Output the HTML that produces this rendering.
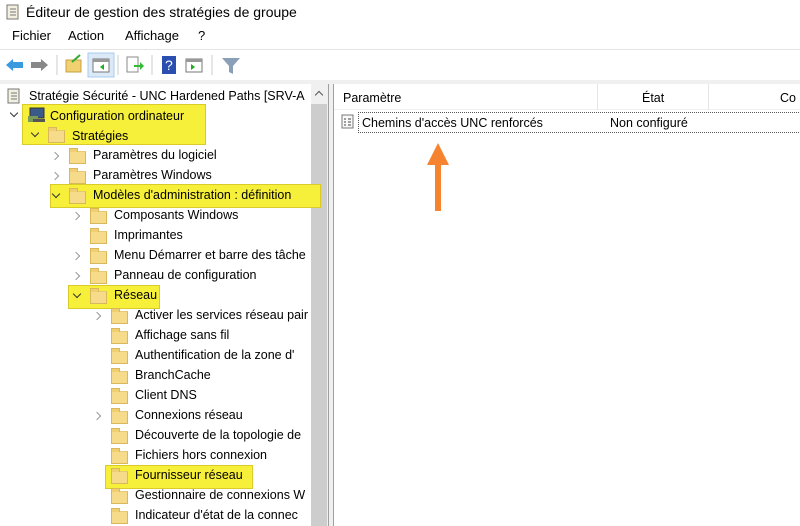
<!DOCTYPE html>
<html><head><meta charset="utf-8"><style>
*{margin:0;padding:0;box-sizing:border-box}
body{width:800px;height:526px;overflow:hidden;background:#fff;font-family:"Liberation Sans",sans-serif;font-size:12.5px;color:#000;position:relative}
.a{position:absolute;white-space:nowrap}
.hl{position:absolute;background:#f7f03a;border:1px solid #d9cc2a}
.fold{position:absolute;width:17px;height:13px;background:#f6dc8a;border:1px solid #d8b85a;border-top-color:#e7c874}
.fold:before{content:"";position:absolute;left:-1px;top:-4px;width:7px;height:3px;background:#f0cf72;border:1px solid #d8b85a;border-bottom:none}
.chev{position:absolute;width:6px;height:6px;border-right:1.5px solid #999;border-bottom:1.5px solid #999}
.r{transform:rotate(-45deg)}
.d{transform:rotate(45deg);border-color:#333}
.txt{position:absolute;white-space:nowrap;font-size:12.5px}
</style></head><body>
<svg class="a" style="left:5px;top:3px" width="16" height="18"><rect x="2" y="2" width="11" height="14" fill="#f3f0e0" stroke="#777"/><line x1="5" y1="6" x2="11" y2="6" stroke="#777"/><line x1="5" y1="9" x2="11" y2="9" stroke="#777"/><line x1="5" y1="12" x2="11" y2="12" stroke="#777"/></svg>
<div class="a" style="left:26px;top:4px;font-size:14px">Éditeur de gestion des stratégies de groupe</div>
<div class="a" style="left:12px;top:28px;font-size:13px">Fichier</div>
<div class="a" style="left:68px;top:28px;font-size:13px">Action</div>
<div class="a" style="left:125px;top:28px;font-size:13px">Affichage</div>
<div class="a" style="left:198px;top:28px;font-size:13px">?</div>
<div class="a" style="left:0;top:49px;width:800px;height:1px;background:#e5e5e5"></div>
<svg class="a" style="left:0;top:50px" width="260" height="30">
<path d="M6 15 L13 9 V12 H23 V18 H13 V21 Z" fill="#3a9ae0"/>
<path d="M48 15 L41 9 V12 H31 V18 H41 V21 Z" fill="#888"/>
<line x1="57" y1="5" x2="57" y2="25" stroke="#ccc"/>
<rect x="66" y="10" width="15" height="12" fill="#f0d070" stroke="#c8a040"/><path d="M72 12 L80 5" stroke="#3a3" stroke-width="2"/>
<rect x="88" y="3" width="26" height="24" fill="#dceaf8" stroke="#a8cbef"/>
<rect x="93" y="9" width="16" height="13" fill="#fff" stroke="#777"/><rect x="93" y="9" width="16" height="3" fill="#999"/><path d="M104 14 L100 17 L104 20Z" fill="#2a2"/>
<line x1="118" y1="5" x2="118" y2="25" stroke="#ccc"/>
<rect x="127" y="7" width="11" height="15" fill="#fff" stroke="#888"/><path d="M134 15 H140 V12 L144 16 L140 20 V17 H134Z" fill="#3b3"/>
<line x1="152" y1="5" x2="152" y2="25" stroke="#ccc"/>
<rect x="162" y="6" width="14" height="18" fill="#2a4fb0"/><text x="165" y="20" fill="#fff" font-size="14" font-family="Liberation Sans">?</text>
<rect x="186" y="9" width="16" height="13" fill="#fff" stroke="#777"/><rect x="186" y="9" width="16" height="3" fill="#999"/><path d="M191 14 L195 17 L191 20Z" fill="#2a2"/>
<line x1="212" y1="5" x2="212" y2="25" stroke="#ccc"/>
<path d="M222 8 H240 L233 16 V24 L229 22 V16 Z" fill="#8aa0b8"/>
</svg>
<div class="a" style="left:0;top:80px;width:800px;height:4px;background:#f0f0f0"></div>
<div class="a" style="left:328px;top:84px;width:6px;height:442px;border-left:1px solid #a0a0a0;border-right:1px solid #a0a0a0;background:#f0f0f0"></div>
<div class="a" style="left:311px;top:84px;width:17px;height:442px;background:#f0f0f0"></div>
<div class="a" style="left:311px;top:104px;width:16px;height:422px;background:#cdcdcd"></div>
<div class="chev" style="left:316px;top:92px;transform:rotate(-135deg);border-color:#555"></div>
<div class="hl" style="left:22px;top:104px;width:184px;height:41px"></div>
<div class="hl" style="left:50px;top:184px;width:271px;height:24px"></div>
<div class="hl" style="left:68px;top:285px;width:92px;height:24px"></div>
<div class="hl" style="left:105px;top:465px;width:148px;height:24px"></div>
<svg class="a" style="left:6px;top:87px" width="16" height="18"><rect x="2" y="2" width="11" height="14" fill="#f3f0e0" stroke="#777"/><line x1="5" y1="6" x2="11" y2="6" stroke="#777"/><line x1="5" y1="9" x2="11" y2="9" stroke="#777"/><line x1="5" y1="12" x2="11" y2="12" stroke="#777"/></svg>
<div class="txt" style="left:29px;top:89px">Stratégie Sécurité - UNC Hardened Paths [SRV-A</div>
<div class="chev d" style="left:11px;top:110px"></div>
<svg class="a" style="left:27px;top:106px" width="20" height="18"><rect x="3" y="2" width="14" height="10" fill="#3a5a8a" stroke="#333"/><rect x="1" y="10" width="10" height="6" fill="#7a9a5a"/><rect x="6" y="13" width="12" height="3" fill="#555"/></svg>
<div class="txt" style="left:50px;top:109px">Configuration ordinateur</div>
<div class="chev d" style="left:32px;top:130px"></div>
<div class="fold" style="left:48px;top:130px"></div><div class="txt" style="left:72px;top:129px">Stratégies</div>
<div id="tree"></div>
<script>
var rows=[[2,1,"Paramètres du logiciel"],[2,1,"Paramètres Windows"],[2,2,"Modèles d'administration : définition"],[3,1,"Composants Windows"],[3,0,"Imprimantes"],[3,1,"Menu Démarrer et barre des tâche"],[3,1,"Panneau de configuration"],[3,2,"Réseau"],[4,1,"Activer les services réseau pair"],[4,0,"Affichage sans fil"],[4,0,"Authentification de la zone d'"],[4,0,"BranchCache"],[4,0,"Client DNS"],[4,1,"Connexions réseau"],[4,0,"Découverte de la topologie de"],[4,0,"Fichiers hors connexion"],[4,0,"Fournisseur réseau"],[4,0,"Gestionnaire de connexions W"],[4,0,"Indicateur d'état de la connec"]];
var h="";rows.forEach(function(r,i){var y=156+i*20;var cx=56+21*(r[0]-2);
if(r[1]==1)h+='<div class="chev r" style="left:'+(cx-4)+'px;top:'+(y-3)+'px"></div>';
if(r[1]==2)h+='<div class="chev d" style="left:'+(cx-3)+'px;top:'+(y-5)+'px"></div>';
h+='<div class="fold" style="left:'+(cx+13)+'px;top:'+(y-5)+'px"></div>';
h+='<div class="txt" style="left:'+(cx+37)+'px;top:'+(y-8)+'px;max-width:'+(311-cx-37)+'px;overflow:hidden">'+r[2]+'</div>';});
document.getElementById('tree').innerHTML=h;
</script>
<div class="a" style="left:334px;top:84px;width:466px;height:26px;background:#fff;border-bottom:1px solid #f0f0f0"></div>
<div class="txt" style="left:343px;top:91px">Paramètre</div>
<div class="a" style="left:597px;top:84px;width:1px;height:26px;background:#e5e5e5"></div>
<div class="txt" style="left:642px;top:91px">État</div>
<div class="a" style="left:708px;top:84px;width:1px;height:26px;background:#e5e5e5"></div>
<div class="txt" style="left:780px;top:91px">Co</div>
<svg class="a" style="left:341px;top:114px" width="14" height="16"><rect x="1" y="1" width="11" height="13" fill="#f8f8f8" stroke="#777"/><line x1="3" y1="5" x2="5" y2="5" stroke="#444"/><line x1="7" y1="5" x2="10" y2="5" stroke="#444"/><line x1="3" y1="8" x2="5" y2="8" stroke="#444"/><line x1="7" y1="8" x2="10" y2="8" stroke="#444"/><line x1="3" y1="11" x2="5" y2="11" stroke="#444"/><line x1="7" y1="11" x2="10" y2="11" stroke="#444"/></svg>
<div class="a" style="left:358px;top:112px;width:445px;height:21px;border:1px dotted #555"></div>
<div class="txt" style="left:362px;top:116px">Chemins d'accès UNC renforcés</div>
<div class="txt" style="left:610px;top:116px">Non configuré</div>
<svg class="a" style="left:425px;top:135px" width="30" height="80"><path d="M13 8 L2 30 H10 V76 H16 V30 H24 Z" fill="#f58330"/></svg>
</body></html>
